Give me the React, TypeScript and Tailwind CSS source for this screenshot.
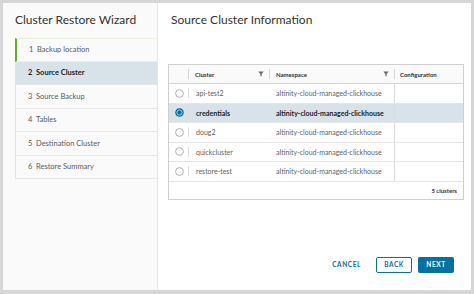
import React from "react";

const steps = [
  "Backup location",
  "Source Cluster",
  "Source Backup",
  "Tables",
  "Destination Cluster",
  "Restore Summary",
];

const clusters = ["api-test2", "credentials", "doug2", "quickcluster", "restore-test"];

const Funnel = () => (
  <svg width="6" height="6" viewBox="0 0 6 6" className="shrink-0">
    <path d="M0.3 0.6h5.4L3.6 3v2.6L2.4 5.1V3z" fill="#666" />
  </svg>
);

const Radio = ({ checked }: { checked: boolean }) => (
  <svg width="9" height="9" viewBox="0 0 9 9">
    {checked ? (
      <>
        <circle cx="4.5" cy="4.5" r="4.3" fill="#0072a3" />
        <circle cx="4.5" cy="4.5" r="2.6" fill="none" stroke="#cfe3ee" strokeWidth="0.8" />
      </>
    ) : (
      <circle cx="4.5" cy="4.5" r="3.9" fill="#fff" stroke="#9a9a9a" strokeWidth="0.8" />
    )}
  </svg>
);

export default function App() {
  return (
    <div
      className="w-[474px] h-[294px] bg-[#d6d6d6] pt-[3px] pl-[3px] pr-[3px] pb-[4px]"
      style={{ fontFamily: "Lato, 'Open Sans', sans-serif" }}
    >
      <div className="flex h-full w-full">
        {/* sidebar */}
        <div className="w-[155px] h-full bg-[#fafafa] border-r border-[#e4e4e4] flex flex-col">
          <h1 className="pt-[9px] pl-[12px] text-[12px] leading-[16px] text-[#333]">
            Cluster Restore Wizard
          </h1>
          <div className="mt-[10px] ml-[12px] border-l border-[#e2e2e2]">
            {steps.map((s, i) => (
              <div
                key={s}
                className={`h-[23.5px] flex items-center pl-[12px] text-[7.5px] border-b ${
                  i === 0
                    ? "border-l-2 border-l-[#60b515] -ml-px pl-[11px] border-b-[#eaf1dc] border-t border-t-[#eaf1dc]"
                    : "border-b-[#e6e6e6]"
                } ${i === 1 ? "bg-[#d8e3e9] font-bold text-[#222]" : "text-[#5a5a5a]"}`}
              >
                <span className="w-[8px]">{i + 1}</span>
                <span>{s}</span>
              </div>
            ))}
          </div>
        </div>

        {/* main */}
        <div className="flex-1 bg-white flex flex-col">
          <h2 className="pt-[9px] pl-[13px] text-[12px] leading-[16px] text-[#333]">
            Source Cluster Information
          </h2>
          <div className="mt-[36px] ml-[10px] mr-[7px] border border-[#cfcfcf] text-[7px]">
            <div className="flex h-[19px] items-center bg-[#fafafa] border-b border-[#d6d6d6] font-bold text-[#313131] text-[6px]">
              <div className="w-[19px] h-full" />
              <div className="w-[81px] flex items-center border-l border-[#d6d6d6] h-[10px] pl-[6px] pr-[5px] justify-between">
                <span>Cluster</span>
                <Funnel />
              </div>
              <div className="w-[125px] flex items-center border-l border-[#d6d6d6] h-[10px] pl-[6px] pr-[5px] justify-between">
                <span>Namespace</span>
                <Funnel />
              </div>
              <div className="flex-1 flex items-center border-l border-[#d6d6d6] h-[10px] pl-[5px]">
                <span>Configuration</span>
              </div>
            </div>
            {clusters.map((c, i) => (
              <div
                key={c}
                className={`flex h-[19.5px] items-center border-b border-[#e6e6e6] ${
                  i === 1 ? "bg-[#d8e3e9] font-bold text-[#222]" : "text-[#5f5f5f]"
                }`}
              >
                <div className="w-[19px] flex justify-center pl-[2px]">
                  <Radio checked={i === 1} />
                </div>
                <div className="w-[81px] h-[10px] flex items-center border-l border-[#dcdcdc] pl-[7px]">
                  {c}
                </div>
                <div className="w-[125px] pl-[7px]">altinity-cloud-managed-clickhouse</div>
                <div className="flex-1 h-full border-l border-[#dcdcdc]" />
              </div>
            ))}
            <div className="h-[17px] flex items-center justify-end pr-[6px] text-[6px] font-bold text-[#333]">
              5 clusters
            </div>
          </div>
          <div className="mt-auto mb-[17px] mr-[17px] flex items-center justify-end gap-[6px] text-[6.5px] font-bold tracking-[0.6px]">
            <button className="h-[16px] px-[9px] text-[#0072a3]">CANCEL</button>
            <button className="h-[16px] w-[36px] border border-[#0072a3] rounded-[2px] text-[#0072a3] bg-white">
              BACK
            </button>
            <button className="h-[16px] w-[36px] rounded-[2px] bg-[#0072a3] text-white">
              NEXT
            </button>
          </div>
        </div>
      </div>
    </div>
  );
}
